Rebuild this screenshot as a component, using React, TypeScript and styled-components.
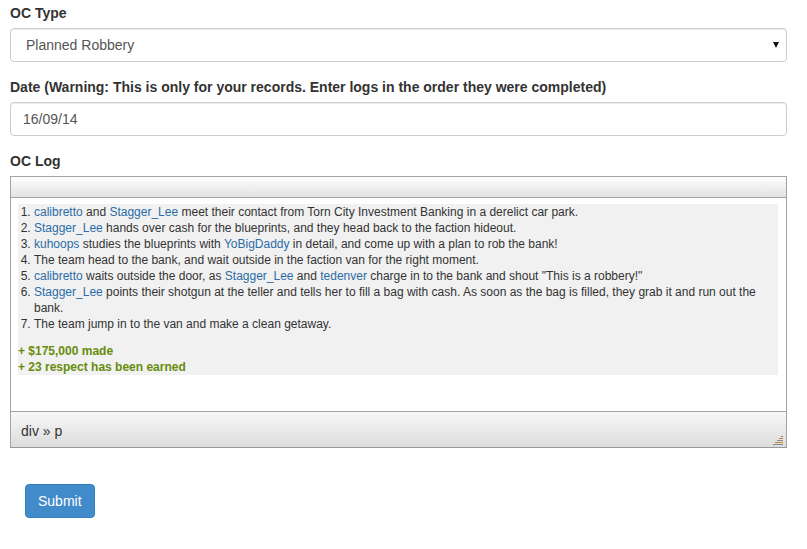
import React from 'react';
import styled, { createGlobalStyle } from 'styled-components';

const GlobalStyle = createGlobalStyle`
  body {
    margin: 0;
    background: #fff;
    font-family: "Liberation Sans", Arial, sans-serif;
    font-size: 14px;
    color: #333;
  }
`;

const Page = styled.form`
  width: 777px;
  padding: 3px 0 0 10px;
`;

const FormGroup = styled.div`
  margin-bottom: 15px;
`;

const Label = styled.label`
  display: block;
  font-weight: bold;
  line-height: 20px;
  margin-bottom: 5px;
`;

const SelectWrap = styled.div`
  position: relative;
`;

const Select = styled.select`
  display: block;
  width: 100%;
  height: 34px;
  box-sizing: border-box;
  padding: 6px 12px 6px 15px;
  border: 1px solid #ccc;
  border-radius: 4px;
  background: #fff;
  color: #555;
  font-family: inherit;
  font-size: 14px;
  appearance: none;
  box-shadow: inset 0 1px 1px rgba(0, 0, 0, 0.075);
`;

const Arrow = styled.span`
  position: absolute;
  right: 8px;
  top: 14px;
  width: 0;
  height: 0;
  border-left: 3px solid transparent;
  border-right: 3px solid transparent;
  border-top: 6px solid #111;
  pointer-events: none;
`;

const Input = styled.input`
  display: block;
  width: 100%;
  height: 34px;
  box-sizing: border-box;
  padding: 6px 12px;
  border: 1px solid #ccc;
  border-radius: 4px;
  color: #555;
  font-family: inherit;
  font-size: 14px;
  box-shadow: inset 0 1px 1px rgba(0, 0, 0, 0.075);
`;

const Editor = styled.div`
  border: 1px solid #a4a4a4;
  border-bottom-color: #999;
`;

const Toolbar = styled.div`
  height: 20px;
  border-bottom: 1px solid #a4a4a4;
  background: linear-gradient(#fdfdfd, #e2e2e2);
`;

const Content = styled.div`
  height: 213px;
  box-sizing: border-box;
  padding: 6px 8px 0 7px;
  background: #fff;
  font-size: 12px;
  line-height: 16px;
`;

const Block = styled.div`
  background: #f1f1f1;
`;

const LogList = styled.ol`
  margin: 0;
  padding-left: 16px;

  li::marker {
    font-size: 12px;
  }
`;

const Player = styled.a`
  color: #2b6ca6;
  text-decoration: none;
`;

const Gain = styled.p`
  margin: 0;
  font-weight: bold;
  color: #678c0c;
  &:first-of-type {
    margin-top: 11px;
  }
`;

const StatusBar = styled.div`
  height: 36px;
  box-sizing: border-box;
  border-top: 1px solid #a4a4a4;
  background: linear-gradient(#f8f8f8, #dcdcdc);
  display: flex;
  justify-content: space-between;
  align-items: flex-end;
  padding: 0 3px 2px 10px;
`;

const Path = styled.span`
  align-self: center;
  margin-top: 4px;
  color: #333;
  font-size: 14px;
`;

const SubmitRow = styled.div`
  padding: 36px 0 0 15px;
`;

const Button = styled.button`
  height: 34px;
  padding: 6px 12px;
  border: 1px solid #357ebd;
  border-radius: 4px;
  background: #428bca;
  color: #fff;
  font-family: inherit;
  font-size: 14px;
  cursor: pointer;
`;

function Grip() {
  return (
    <svg width="10" height="10" viewBox="0 0 10 10">
      {[1, 3, 5, 7, 9].map((y, i) => (
        <rect key={y} x={8 - i * 2} y={y} width={2 + i * 2} height="1" fill={i % 2 ? '#c08a2a' : '#888'} />
      ))}
    </svg>
  );
}

export default function App() {
  return (
    <>
      <GlobalStyle />
      <Page onSubmit={(e) => e.preventDefault()}>
        <FormGroup>
          <Label>OC Type</Label>
          <SelectWrap>
            <Select defaultValue="robbery">
              <option value="robbery">Planned Robbery</option>
            </Select>
            <Arrow />
          </SelectWrap>
        </FormGroup>

        <FormGroup>
          <Label>Date (Warning: This is only for your records. Enter logs in the order they were completed)</Label>
          <Input defaultValue="16/09/14" />
        </FormGroup>

        <Label>OC Log</Label>
        <Editor>
          <Toolbar />
          <Content>
            <Block>
              <LogList>
                <li><Player>calibretto</Player> and <Player>Stagger_Lee</Player> meet their contact from Torn City Investment Banking in a derelict car park.</li>
                <li><Player>Stagger_Lee</Player> hands over cash for the blueprints, and they head back to the faction hideout.</li>
                <li><Player>kuhoops</Player> studies the blueprints with <Player>YoBigDaddy</Player> in detail, and come up with a plan to rob the bank!</li>
                <li>The team head to the bank, and wait outside in the faction van for the right moment.</li>
                <li><Player>calibretto</Player> waits outside the door, as <Player>Stagger_Lee</Player> and <Player>tedenver</Player> charge in to the bank and shout "This is a robbery!"</li>
                <li><Player>Stagger_Lee</Player> points their shotgun at the teller and tells her to fill a bag with cash. As soon as the bag is filled, they grab it and run out the bank.</li>
                <li>The team jump in to the van and make a clean getaway.</li>
              </LogList>
              <Gain>+ $175,000 made</Gain>
              <Gain>+ 23 respect has been earned</Gain>
            </Block>
          </Content>
          <StatusBar>
            <Path>div » p</Path>
            <Grip />
          </StatusBar>
        </Editor>

        <SubmitRow>
          <Button type="submit">Submit</Button>
        </SubmitRow>
      </Page>
    </>
  );
}
